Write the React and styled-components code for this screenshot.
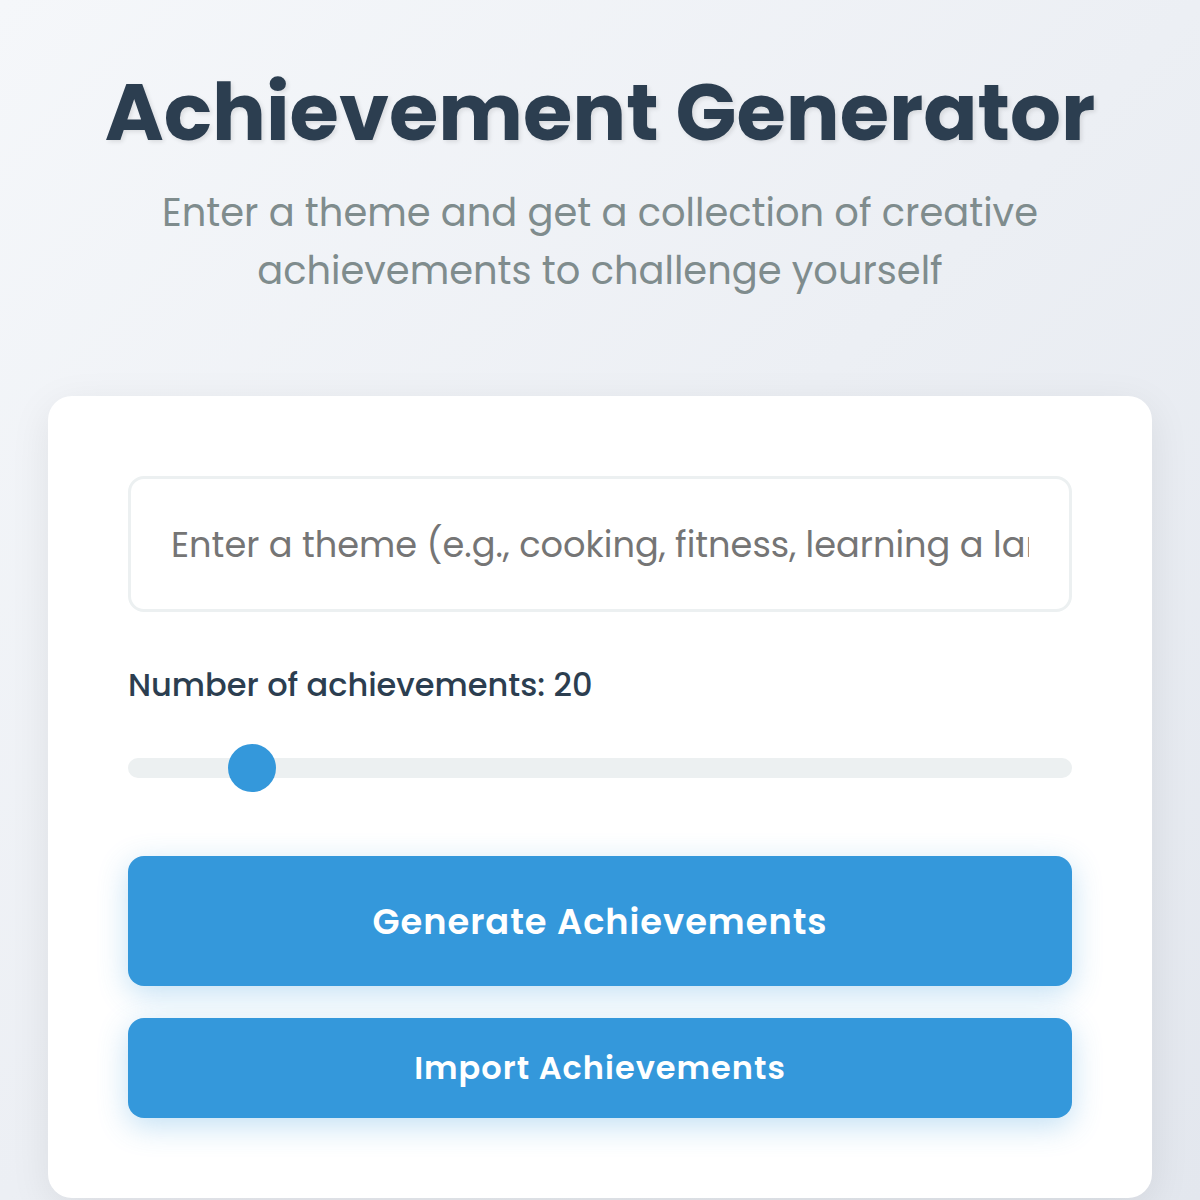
import React, { useState } from "react";
import styled, { createGlobalStyle } from "styled-components";

const GlobalStyle = createGlobalStyle`
  html, body {
    margin: 0;
    padding: 0;
  }
  body {
    min-height: 1200px;
    background: linear-gradient(135deg, #f5f7fa 0%, #e3e7ee 100%);
    font-family: "Poppins", "Lato", "Liberation Sans", sans-serif;
  }
  * {
    box-sizing: border-box;
  }
`;

const Page = styled.main`
  padding: 64px 48px 0;
`;

const Header = styled.header`
  text-align: center;
  margin-bottom: 96px;
`;

const Title = styled.h1`
  margin: 0 0 24px;
  font-size: 80px;
  line-height: 1.2;
  font-weight: 700;
  color: #2c3e50;
  text-shadow: 2px 2px 4px rgba(0, 0, 0, 0.1);
`;

const Subtitle = styled.p`
  margin: 0 auto;
  max-width: 900px;
  font-size: 38.4px;
  line-height: 58px;
  font-weight: 400;
  color: #7f8c8d;
`;

const Card = styled.section`
  background: #fff;
  border-radius: 24px;
  padding: 80px;
  box-shadow: 0 10px 40px rgba(0, 0, 0, 0.08);
`;

const ThemeInput = styled.input`
  display: block;
  width: 100%;
  height: 136px;
  padding: 0 40px;
  border: 3px solid #ecf0f1;
  border-radius: 16px;
  font-family: inherit;
  font-size: 35.2px;
  color: #2c3e50;
  outline: none;
  &::placeholder {
    color: #757575;
  }
`;

const Label = styled.label`
  display: block;
  margin: 53px 0 0;
  font-size: 32px;
  line-height: 40px;
  font-weight: 500;
  color: #2c3e50;
`;

const Range = styled.input`
  display: block;
  width: 100%;
  height: 20px;
  margin: 53px 0 0;
  appearance: none;
  -webkit-appearance: none;
  background: #ecf0f1;
  border-radius: 10px;
  outline: none;
  &::-webkit-slider-thumb {
    -webkit-appearance: none;
    width: 48px;
    height: 48px;
    border-radius: 50%;
    background: #3498db;
    border: none;
    cursor: pointer;
  }
`;

const Actions = styled.div`
  display: flex;
  flex-direction: column;
  gap: 32px;
  margin-top: 78px;
`;

const Button = styled.button`
  width: 100%;
  height: ${(p) => (p.$large ? "130px" : "100px")};
  border: none;
  border-radius: 16px;
  background: #3498db;
  color: #fff;
  font-family: inherit;
  font-size: ${(p) => (p.$large ? "35.2px" : "32px")};
  font-weight: 600;
  letter-spacing: 1px;
  cursor: pointer;
  box-shadow: 0 8px 30px rgba(52, 152, 219, 0.3);
`;

export default function App() {
  const [count, setCount] = useState(20);
  return (
    <>
      <GlobalStyle />
      <Page>
        <Header>
          <Title>Achievement Generator</Title>
          <Subtitle>
            Enter a theme and get a collection of creative achievements to
            challenge yourself
          </Subtitle>
        </Header>
        <Card>
          <ThemeInput
            type="text"
            placeholder="Enter a theme (e.g., cooking, fitness, learning a language)"
          />
          <Label htmlFor="count">Number of achievements: {count}</Label>
          <Range
            id="count"
            type="range"
            min="10"
            max="100"
            value={count}
            onChange={(e) => setCount(Number(e.target.value))}
          />
          <Actions>
            <Button $large>Generate Achievements</Button>
            <Button>Import Achievements</Button>
          </Actions>
        </Card>
      </Page>
    </>
  );
}
